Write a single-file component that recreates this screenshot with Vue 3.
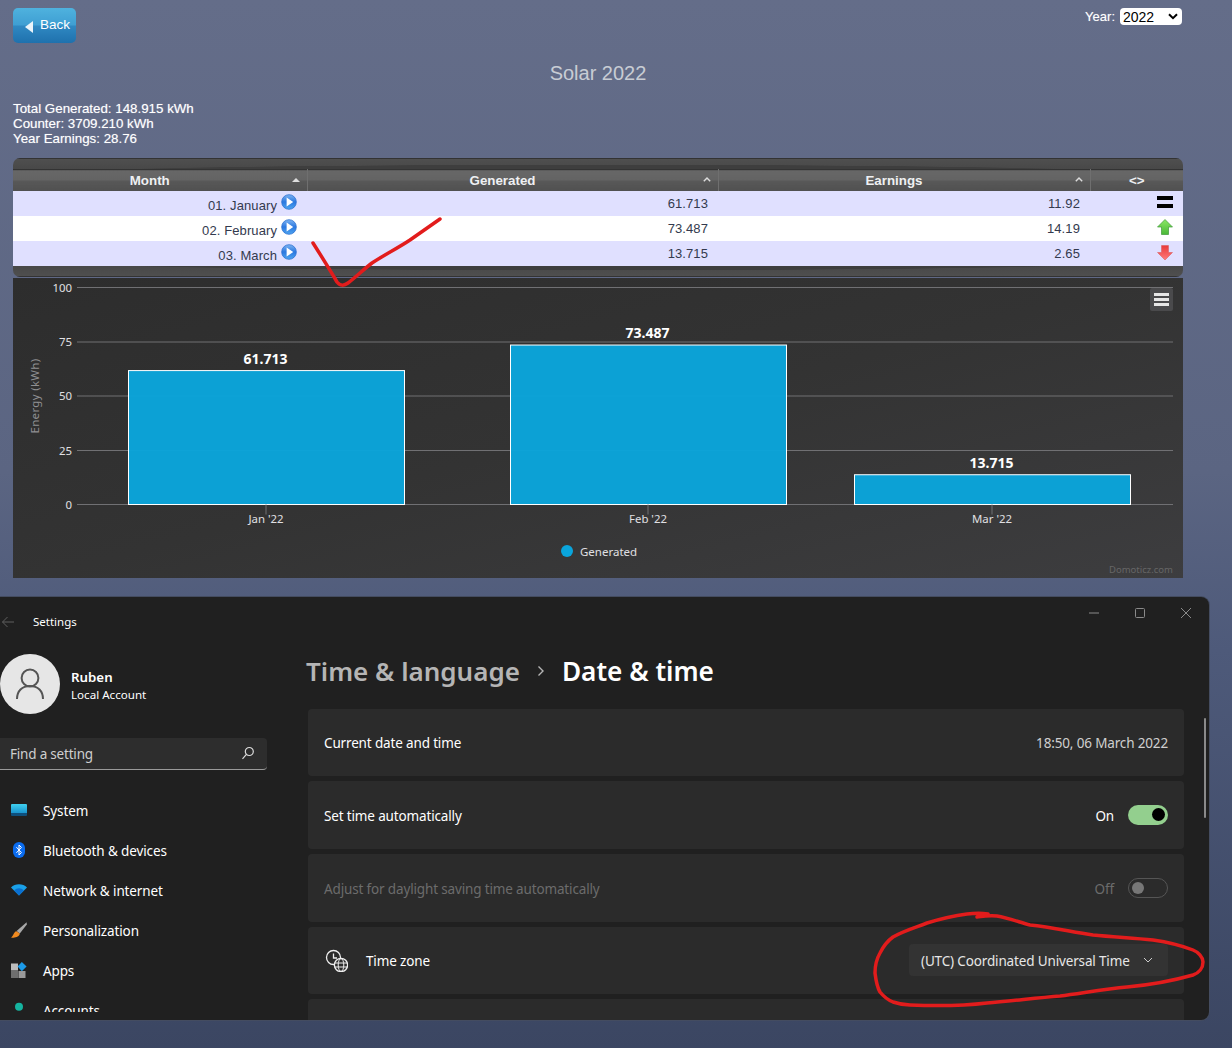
<template>
  <div class="page">
    <!-- Domoticz report -->
    <header class="top">
      <button class="back"><span class="back-arrow"></span>Back</button>
      <label class="year">
        Year:
        <span class="year-box">
          <select class="year-select"><option>2022</option><option>2021</option></select>
          <svg class="year-chevron" width="10" height="7" viewBox="0 0 10 7"><path d="M1 1.2 5 5.2 9 1.2" fill="none" stroke="#000" stroke-width="2"/></svg>
        </span>
      </label>
    </header>
    <h1 class="title">Solar 2022</h1>
    <div class="stats">
      <div>Total Generated: 148.915 kWh</div>
      <div>Counter: 3709.210 kWh</div>
      <div>Year Earnings: 28.76</div>
    </div>

    <div class="table-wrap">
      <div class="swoosh swoosh-top"></div>
      <table class="report">
        <colgroup><col style="width:294px"><col style="width:411px"><col style="width:372px"><col style="width:93px"></colgroup>
        <thead>
          <tr>
            <th>Month<span class="sort-up"></span></th>
            <th>Generated<svg class="sort-chev" width="8" height="5" viewBox="0 0 8 5"><path d="M.8 4.2 4 1l3.2 3.2" fill="none" stroke="#ddd" stroke-width="1.4"/></svg></th>
            <th>Earnings<svg class="sort-chev" width="8" height="5" viewBox="0 0 8 5"><path d="M.8 4.2 4 1l3.2 3.2" fill="none" stroke="#ddd" stroke-width="1.4"/></svg></th>
            <th class="last">&lt;&gt;</th>
          </tr>
        </thead>
        <tbody>
          <tr v-for="r in rows" :key="r.month">
            <td class="month">
              <span>{{ r.month }}</span>
              <svg class="play" width="16" height="16" viewBox="0 0 17 17">
                <defs>
                  <linearGradient id="playFill" x1="0" y1="0" x2="0" y2="1">
                    <stop offset="0" stop-color="#7db4f2"/><stop offset="0.5" stop-color="#2b78e0"/><stop offset="1" stop-color="#4fa6f0"/>
                  </linearGradient>
                </defs>
                <circle cx="8.5" cy="8.5" r="7.8" fill="url(#playFill)" stroke="#2a6fd0" stroke-width="0.8"/>
                <path d="M6 3.6 13 8.5 6 13.4Z" fill="#fff"/>
              </svg>
            </td>
            <td>{{ r.generated }}</td>
            <td>{{ r.earnings }}</td>
            <td class="trend" :class="'trend-' + r.trend">
              <svg v-if="r.trend === 'same'" width="16" height="12" viewBox="0 0 16 12"><rect width="16" height="4"/><rect y="8" width="16" height="4"/></svg>
              <svg v-else-if="r.trend === 'up'" width="16" height="16" viewBox="0 0 16 16">
                <defs><linearGradient id="upFill" x1="0" y1="0" x2="0" y2="1"><stop offset="0" stop-color="#8be866"/><stop offset="1" stop-color="#4ab838"/></linearGradient></defs>
                <path d="M8 .5 15.5 8H11.5V15.5H4.5V8H.5Z" fill="url(#upFill)" stroke="#3f9a3a" stroke-width="0.7"/>
              </svg>
              <svg v-else width="16" height="16" viewBox="0 0 16 16">
                <defs><linearGradient id="downFill" x1="0" y1="0" x2="0" y2="1"><stop offset="0" stop-color="#e83b3b"/><stop offset="1" stop-color="#ff7b7b"/></linearGradient></defs>
                <path d="M4.5 .5H11.5V7.5H15.5L8 15 .5 7.5H4.5Z" fill="url(#downFill)" stroke="#d95555" stroke-width="0.5"/>
              </svg>
            </td>
          </tr>
        </tbody>
      </table>
      <div class="swoosh swoosh-bottom"></div>
    </div>

    <div class="chart">
      <svg class="chart-svg" width="1170" height="300" viewBox="0 0 1170 300">
        <g v-for="t in ticks" :key="t.label">
          <line x1="64" :x2="1160" :y1="t.y" :y2="t.y" stroke="#707073"/>
          <text x="59" :y="t.y + 4" text-anchor="end" class="axis">{{ t.label }}</text>
        </g>
        <text class="axis-title" transform="translate(26 118) rotate(-90)" text-anchor="middle">Energy (kWh)</text>
        <g v-for="b in bars" :key="b.label">
          <rect :x="b.x" :y="226.5 - b.value * 2.17" width="276" :height="b.value * 2.17" fill="#0aa5dc" fill-opacity="0.96" stroke="#fff"/>
          <line :x1="b.tick" :x2="b.tick" y1="226.5" y2="236.5" stroke="#707073"/>
          <text :x="b.x + 137" :y="226.5 - b.value * 2.17 - 7" text-anchor="middle" class="data-label">{{ b.value.toFixed(3) }}</text>
          <text :x="b.tick" y="245" text-anchor="middle" class="axis">{{ b.label }}</text>
        </g>
        <circle cx="554" cy="273" r="6" fill="#0aa5dc"/>
        <text x="567" y="278" class="legend">Generated</text>
        <text x="1160" y="295" text-anchor="end" class="credit">Domoticz.com</text>
      </svg>
      <div class="chart-menu"><span></span><span></span><span></span></div>
    </div>

    <!-- Windows settings window -->
    <section class="win">
      <div class="titlebar">
        <svg class="back-small" width="14" height="12" viewBox="0 0 14 12"><path d="M13 6H1.5M6.5 1 1.5 6l5 5" fill="none" stroke="#5f5f5f"/></svg>
        <span class="app-name">Settings</span>
        <div class="controls">
          <svg width="12" height="12" viewBox="0 0 12 12"><path d="M1 6h10" stroke="#8a8a8a"/></svg>
          <svg width="12" height="12" viewBox="0 0 12 12"><rect x="1.5" y="1.5" width="9" height="9" rx="1" fill="none" stroke="#8a8a8a"/></svg>
          <svg width="12" height="12" viewBox="0 0 12 12"><path d="M1 1l10 10M11 1 1 11" stroke="#8a8a8a"/></svg>
        </div>
      </div>
      <div class="win-body">
        <aside class="sidebar">
          <div class="profile">
            <div class="avatar">
              <svg width="30" height="32" viewBox="0 0 30 32"><circle cx="15" cy="10" r="8.4" fill="none" stroke="#555" stroke-width="2"/><path d="M2 31c0-8 5-13 13-13s13 5 13 13" fill="none" stroke="#555" stroke-width="2"/></svg>
            </div>
            <div class="user">
              <div class="user-name">Ruben</div>
              <div class="user-type">Local Account</div>
            </div>
          </div>
          <div class="search">
            <span>Find a setting</span>
            <svg width="14" height="14" viewBox="0 0 14 14"><circle cx="8.3" cy="5.5" r="4" fill="none" stroke="#ddd" stroke-width="1.2"/><path d="M5.4 8.4 1.5 12.8" stroke="#ddd" stroke-width="1.2"/></svg>
          </div>
          <nav class="nav">
            <div v-for="n in nav" :key="n" class="nav-item">
              <span class="nav-icon">
                <svg v-if="n === 'System'" width="16" height="12" viewBox="0 0 16 12"><defs><linearGradient id="sysFill" x1="0" y1="0" x2="0" y2="1"><stop offset="0" stop-color="#3fd0ee"/><stop offset="0.75" stop-color="#1a94cf"/><stop offset="0.76" stop-color="#0e4f7c"/><stop offset="1" stop-color="#0e4f7c"/></linearGradient></defs><rect width="16" height="12" rx="1" fill="url(#sysFill)"/></svg>
                <svg v-else-if="n === 'Bluetooth & devices'" width="12" height="16" viewBox="0 0 12 16"><rect width="12" height="16" rx="6" fill="#0a6cf0"/><path d="M3.4 5.2 8.4 10.6 6 13V3L8.4 5.4 3.4 10.8" fill="none" stroke="#fff"/></svg>
                <svg v-else-if="n === 'Network & internet'" width="16" height="12" viewBox="0 0 16 12"><path d="M0 3.4C4-.9 12-.9 16 3.4L8 11.6Z" fill="#1aa0e8"/><path d="M3.2 6.6C6 3.4 10 3.4 12.8 6.6L8 11.6Z" fill="#0a6fd0"/></svg>
                <svg v-else-if="n === 'Personalization'" width="16" height="16" viewBox="0 0 16 16"><path d="M15.6.2 15.8 2.4 8.8 11.4 5.6 9Z" fill="#a8a8a8"/><path d="M5.4 9.2C2.6 9.8 3 13.4 0 15.4 3.8 16.4 8.4 15 8.8 11.6Z" fill="#f08a20"/></svg>
                <svg v-else-if="n === 'Apps'" width="16" height="16" viewBox="0 0 16 16"><rect y="1.5" width="7" height="7" fill="#bdbdbd"/><rect y="9" width="7" height="7" fill="#6e6e6e"/><rect x="7.5" y="9" width="7" height="7" fill="#9a9a9a"/><path d="M10.8 0 15.6 4.6 10.8 9.2 6.6 4.6Z" fill="#1c9ae8"/></svg>
                <svg v-else width="14" height="16" viewBox="0 0 14 16"><circle cx="7" cy="4.8" r="4" fill="#15b4a0"/><rect x="1" y="10" width="12" height="1.2" fill="#15b4a0"/></svg>
              </span>
              {{ n }}
            </div>
          </nav>
        </aside>
        <main class="content">
          <div class="crumbs">
            <span class="crumb-parent">Time &amp; language</span>
            <svg width="10" height="12" viewBox="0 0 10 12"><path d="M2.5 1.5 7 6l-4.5 4.5" fill="none" stroke="#b5b5b5" stroke-width="1.4"/></svg>
            <span class="crumb-current">Date &amp; time</span>
          </div>
          <div class="card short">
            <span class="label">Current date and time</span>
            <span class="value label">18:50, 06 March 2022</span>
          </div>
          <div class="card">
            <span class="label">Set time automatically</span>
            <span class="toggle-wrap"><span class="state label">On</span><span class="toggle on"><i></i></span></span>
          </div>
          <div class="card muted">
            <span class="label">Adjust for daylight saving time automatically</span>
            <span class="toggle-wrap"><span class="state label">Off</span><span class="toggle off"><i></i></span></span>
          </div>
          <div class="card short">
            <span class="zone-label">
              <svg width="23" height="23" viewBox="0 0 23 23">
                <circle cx="8.5" cy="8.5" r="7" fill="none" stroke="#eee" stroke-width="1.3"/>
                <path d="M8.5 4.5V9H12" fill="none" stroke="#eee" stroke-width="1.3"/>
                <circle cx="16" cy="16" r="6.6" fill="#2b2b2b" stroke="#eee" stroke-width="1.3"/>
                <ellipse cx="16" cy="16" rx="2.8" ry="6.4" fill="none" stroke="#eee"/>
                <path d="M9.6 14H22.4M9.6 18H22.4" stroke="#eee"/>
              </svg>
              <span class="label">Time zone</span>
            </span>
            <span class="dropdown">
              <span class="label">(UTC) Coordinated Universal Time</span>
              <svg width="10" height="6" viewBox="0 0 10 6"><path d="M1 1l4 4 4-4" fill="none" stroke="#ccc"/></svg>
            </span>
          </div>
          <div class="card"></div>
        </main>
      </div>
      <div class="scrollbar"></div>
    </section>

    <!-- hand drawn marks on top of the screenshot -->
    <svg class="marks" width="1232" height="1048" viewBox="0 0 1232 1048">
      <path d="M313 243C320 254 330 270 337 282 340 286 344 286 348 283 356 277 364 269 372 263 384 255 398 248 410 240 420 233 430 226 440 219" />
      <path d="M988 914C982 913 975 913 967 914 952 916 940 919 927 923 914 928 903 931 893 937 886 942 883 947 880 953 876 960 875 966 875 973 876 981 877 987 880 992 884 997 888 1000 893 1002 899 1004 904 1005 910 1005 935 1006 962 1006 987 1003 1011 1001 1036 998 1060 996 1083 993 1105 989 1127 987 1149 985 1172 981 1193 975 1199 973 1203 968 1203 962 1203 957 1198 952 1193 950 1180 945 1167 942 1153 940 1133 938 1113 937 1093 935 1072 932 1051 927 1030 925 1019 922 1008 918 997 916 990 915 984 916 977 917" />
    </svg>
  </div>
</template>

<script setup>
const rows = [
  { month: '01. January', generated: '61.713', earnings: '11.92', trend: 'same' },
  { month: '02. February', generated: '73.487', earnings: '14.19', trend: 'up' },
  { month: '03. March', generated: '13.715', earnings: '2.65', trend: 'down' }
]

const ticks = [
  { label: '100', y: 9.5 },
  { label: '75', y: 64 },
  { label: '50', y: 118 },
  { label: '25', y: 172.5 },
  { label: '0', y: 226.5 }
]

const bars = [
  { label: "Jan '22", value: 61.713, x: 115.5, tick: 253 },
  { label: "Feb '22", value: 73.487, x: 497.5, tick: 635 },
  { label: "Mar '22", value: 13.715, x: 841.5, tick: 979 }
]

const nav = ['System', 'Bluetooth & devices', 'Network & internet', 'Personalization', 'Apps', 'Accounts']
</script>

<style>
html, body { margin: 0; background: #3b4662; }
</style>

<style scoped>
.page {
  position: relative;
  width: 1232px;
  height: 1048px;
  overflow: hidden;
  box-sizing: border-box;
  padding-top: 8px;
  background: linear-gradient(#646d89 0, #5b6582 45%, #4e5a7a 62%, #3b4662 100%);
  font-family: "Liberation Sans", Arial, sans-serif;
}

.top {
  display: flex;
  justify-content: space-between;
  align-items: flex-start;
  padding: 0 50px 0 13px;
  height: 35px;
}
.back {
  display: flex;
  align-items: center;
  width: 63px;
  height: 35px;
  padding: 0 0 2px 12px;
  border: none;
  border-radius: 5px;
  background: linear-gradient(#4fb2de 0, #3f9fd3 48%, #2f88c2 52%, #1f71ad 100%);
  color: #fff;
  font: 13.5px "Liberation Sans", sans-serif;
}
.back-arrow {
  width: 0;
  height: 0;
  margin-right: 7px;
  margin-top: 5px;
  border-top: 6px solid transparent;
  border-bottom: 6px solid transparent;
  border-right: 8px solid #eaf4fa;
}
.year {
  display: flex;
  align-items: center;
  gap: 5px;
  color: #fff;
  font-size: 13px;
  text-shadow: 0 0 1px rgba(255, 255, 255, 0.4);
}
.year-box { position: relative; display: flex; }
.year-select {
  appearance: none;
  width: 62px;
  height: 17px;
  padding: 0 0 0 3px;
  border: none;
  border-radius: 4px;
  background: #fff;
  color: #000;
  font: 14px "Liberation Sans", sans-serif;
}
.year-chevron { position: absolute; right: 4px; top: 5px; pointer-events: none; }

.title {
  margin: 9px 0 0;
  height: 42px;
  padding-right: 36px;
  color: #c8ccd4;
  font-size: 20px;
  font-weight: 400;
  line-height: 42px;
  text-align: center;
}

.stats {
  margin: 7px 0 0 13px;
  color: #fff;
  font-size: 13.33px;
  line-height: 15px;
  height: 57px;
  text-shadow: 0 0 1px rgba(255, 255, 255, 0.5);
}

.table-wrap {
  width: 1170px;
  margin-left: 13px;
  border-radius: 7px;
  overflow: hidden;
}
.swoosh {
  background:
    radial-gradient(ellipse 60% 100% at 50% 130%, #3e3e3e 70%, transparent 74%),
    linear-gradient(#4f4f4f, #484848);
  border-top: 1px solid #333;
  box-sizing: border-box;
  height: 11px;
}
.swoosh-bottom {
  transform: scaleY(-1);
}
.report {
  width: 1170px;
  table-layout: fixed;
  border-collapse: collapse;
}
.report th {
  position: relative;
  height: 21px;
  padding: 0 20px 0 0;
  box-sizing: border-box;
  background: linear-gradient(#676767 0, #636363 50%, #585858 50%, #505050 100%);
  border-top: 1px solid #333;
  border-right: 1px solid #6f6f6f;
  color: #eef0f2;
  font-size: 13.33px;
  font-weight: 700;
  line-height: 19px;
}
.report th.last { padding: 0; border-right: none; }
.sort-up {
  position: absolute;
  right: 7px;
  top: 8px;
  border-left: 4px solid transparent;
  border-right: 4px solid transparent;
  border-bottom: 4px solid #ddd;
}
.sort-chev {
  position: absolute;
  right: 7px;
  top: 7px;
}
.report td {
  height: 25px;
  padding: 0 10px 0 0;
  box-sizing: border-box;
  text-align: right;
  color: #333a4e;
  font-size: 13px;
  line-height: 25px;
  letter-spacing: 0.1px;
}
.report tr:nth-child(odd) td { background: #e0e0ff; }
.report tr:nth-child(even) td { background: #fff; }
.report td.month { padding-right: 10px; white-space: nowrap; }
.report td.month span { position: relative; top: 2px; }
.play { vertical-align: middle; margin: -3px 0 0 4px; position: relative; top: -1px; }
.report td.trend { line-height: 0; vertical-align: top; }
.report td.trend-same { padding-top: 5px; }
.report td.trend-up { padding-top: 3px; }
.report td.trend-down { padding-top: 4px; }

.chart {
  position: relative;
  width: 1170px;
  height: 300px;
  margin: 1px 0 0 13px;
  background: linear-gradient(165deg, #2d2d2d 0, #333 50%, #3d3d3f 100%);
}
.chart-svg { display: block; font-family: "Noto Sans", sans-serif; }
.axis { fill: #e0e0e3; font-size: 11.4px; }
.axis-title { fill: #8f8f92; font-size: 11.5px; letter-spacing: 0.3px; }
.data-label { fill: #fff; font-size: 14px; font-weight: 700; }
.legend { fill: #e0e0e3; font-size: 11.5px; }
.credit { fill: #666; font-size: 9.5px; }
.chart-menu {
  position: absolute;
  top: 10px;
  right: 10px;
  width: 23px;
  height: 23px;
  box-sizing: border-box;
  padding: 5px 4px;
  display: flex;
  flex-direction: column;
  justify-content: space-between;
  background: #4a4a4c;
  border-radius: 2px;
}
.chart-menu span { display: block; height: 3px; background: #e6e6e6; }

.win {
  position: relative;
  width: 1209px;
  height: 423px;
  margin-top: 19px;
  border-radius: 0 8px 8px 0;
  background: #202020;
  box-shadow: 0 0 0 1px #444c60;
  overflow: hidden;
  color: #fff;
  font-family: "Noto Sans", sans-serif;
}
.titlebar {
  display: flex;
  align-items: center;
  height: 50px;
}
.back-small { margin: 0 0 0 1px; }
.app-name { margin-left: 18px; font-size: 11.5px; }
.controls {
  display: flex;
  gap: 34px;
  margin-left: auto;
  margin-right: 17px;
  align-self: flex-start;
  margin-top: 10px;
}
.win-body { display: flex; }
.sidebar { width: 308px; flex: none; }
.profile { display: flex; align-items: center; gap: 11px; margin-top: 7px; }
.avatar {
  display: flex;
  align-items: center;
  justify-content: center;
  width: 60px;
  height: 60px;
  border-radius: 50%;
  background: #e6e6e6;
}
.user { padding-top: 4px; }
.user-name { font-size: 13.3px; font-weight: 600; line-height: 18px; }
.user-type { font-size: 11.6px; line-height: 18px; }
.search {
  display: flex;
  align-items: center;
  justify-content: space-between;
  box-sizing: border-box;
  width: 267px;
  height: 32px;
  margin-top: 24px;
  padding: 0 12px 0 10px;
  background: #2d2d2d;
  border-bottom: 1px solid #9a9a9a;
  border-radius: 0 4px 4px 0;
  color: #cfcfcf;
  font-size: 13.5px;
  letter-spacing: -0.2px;
}
.search span { padding-top: 2px; }
.nav {
  height: 221px;
  margin-top: 21px;
  overflow: hidden;
}
.nav-item {
  display: flex;
  align-items: center;
  height: 40px;
  font-size: 13.5px;
  letter-spacing: -0.12px;
}
.nav-icon {
  display: flex;
  justify-content: center;
  width: 16px;
  margin: 0 16px 2px 11px;
}
.content { flex: 1; padding: 0 25px 0 0; }
.crumbs {
  display: flex;
  align-items: center;
  gap: 16px;
  height: 48px;
  margin: 0 0 14px -2px;
  font-size: 26px;
  font-weight: 600;
}
.crumb-parent { color: #b5b5b5; }
.crumb-current { font-size: 26.2px; }
.card {
  display: flex;
  align-items: center;
  justify-content: space-between;
  box-sizing: border-box;
  height: 68px;
  margin-bottom: 5px;
  padding: 0 16px;
  background: #2b2b2b;
  border-radius: 4px;
  font-size: 13.5px;
  letter-spacing: -0.15px;
}
.card.short { height: 67px; }
.label { padding-top: 2px; }
.value { color: #cfcfcf; }
.muted { color: #6c6c6c; }
.toggle-wrap { display: flex; align-items: center; gap: 14px; }
.toggle {
  display: flex;
  align-items: center;
  box-sizing: border-box;
  width: 40px;
  height: 20px;
  padding: 0 3px;
  border-radius: 10px;
}
.toggle i { display: block; border-radius: 50%; }
.toggle.on { justify-content: flex-end; background: #93cf8e; }
.toggle.on i { width: 13px; height: 13px; background: #000; }
.toggle.off { border: 1px solid #555; }
.toggle.off i { width: 12px; height: 12px; background: #777; }
.zone-label { display: flex; align-items: center; gap: 18px; margin-left: 1px; }
.dropdown {
  display: flex;
  align-items: center;
  justify-content: space-between;
  box-sizing: border-box;
  width: 259px;
  height: 32px;
  padding: 0 15px 0 12px;
  background: #333;
  border-radius: 4px;
  color: #e6e6e6;
}
.scrollbar {
  position: absolute;
  left: 1204px;
  top: 121px;
  width: 2px;
  height: 100px;
  border-radius: 1px;
  background: #8a8a8a;
}

.marks { position: absolute; left: 0; top: 0; pointer-events: none; }
.marks path {
  fill: none;
  stroke: #e21c1c;
  stroke-width: 3.5;
  stroke-linecap: round;
  stroke-linejoin: round;
}
</style>
